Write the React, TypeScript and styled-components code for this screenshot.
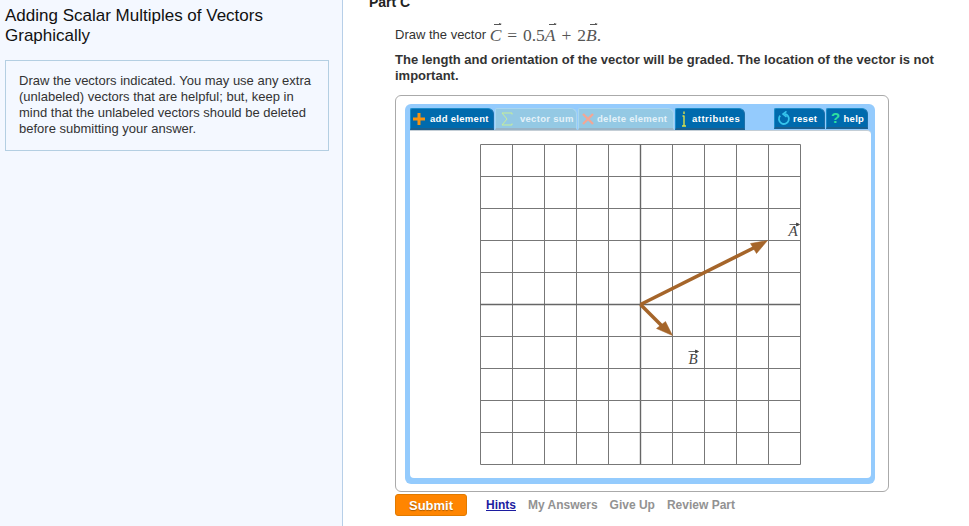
import React from "react";
import styled, { createGlobalStyle } from "styled-components";

const Global = createGlobalStyle`
  html, body { margin: 0; padding: 0; height: 100%; overflow: hidden; background: #fff; }
  body { font-family: "Liberation Sans", Arial, sans-serif; }
`;

const Page = styled.div`
  display: flex;
  width: 969px;
  height: 526px;
  overflow: hidden;
`;

const Sidebar = styled.aside`
  box-sizing: border-box;
  width: 343px;
  flex: none;
  height: 526px;
  padding: 6px 13px 0 5px;
  background: #f4f8ff;
  border-right: 1px solid #b7cfe8;
`;

const Title = styled.h1`
  margin: 0 0 14px;
  font-size: 17px;
  line-height: 20px;
  font-weight: 400;
  color: #111;
`;

const Intro = styled.p`
  box-sizing: border-box;
  margin: 0;
  width: 324px;
  height: 91px;
  padding: 12px 13px 0 13px;
  border: 1px solid #b4cfe2;
  font-size: 13px;
  line-height: 16px;
  color: #333;
`;

const Main = styled.main`
  flex: 1;
  padding-left: 26px;
  margin-top: -5px;
`;

const PartHeading = styled.h2`
  margin: 0 0 8px;
  font-size: 14px;
  line-height: 15px;
  font-weight: 700;
  color: #222;
`;

const Content = styled.div`
  padding-left: 26px;
  width: 546px;
`;

const Question = styled.p`
  margin: 0;
  height: 26px;
  display: flex;
  align-items: flex-end;
  font-size: 13px;
  line-height: 18px;
  color: #333;
  white-space: pre;
`;

const Formula = styled.span`
  font-family: "Liberation Serif", serif;
  font-size: 17.5px;
  line-height: 18px;
  word-spacing: 1.5px;
  color: #555;
`;

const Vec = styled.i`
  position: relative;
  display: inline-block;
  &::before {
    content: "";
    position: absolute;
    left: 4px;
    top: -2px;
    width: 7px;
    height: 1px;
    background: #555;
  }
  &::after {
    content: "";
    position: absolute;
    left: 9px;
    top: -3px;
    border-left: 3px solid #555;
    border-top: 1.5px solid transparent;
    border-bottom: 1.5px solid transparent;
  }
`;

const Note = styled.p`
  margin: 8px 0 11px;
  font-size: 13px;
  line-height: 16px;
  font-weight: 700;
  color: #333;
  width: 545px;
`;

const AppletBox = styled.div`
  box-sizing: border-box;
  width: 494px;
  height: 397px;
  padding: 8px 13px 0 9px;
  border: 1px solid #aaa;
  border-radius: 6px;
  background: #fff;
`;

const Frame = styled.div`
  box-sizing: border-box;
  width: 470px;
  height: 380px;
  padding: 4px 4px 6px 5px;
  background: #94cbfd;
  border-radius: 6px;
  display: flex;
  flex-direction: column;
`;

const Toolbar = styled.div`
  display: flex;
  height: 22px;
  flex: none;
`;

const ToolGroup = styled.div<{ $end?: boolean }>`
  display: flex;
  gap: 1px;
  margin-left: ${(p) => (p.$end ? "auto" : "0")};
  margin-right: ${(p) => (p.$end ? "3px" : "0")};
  height: ${(p) => (p.$end ? "21px" : "22px")};
`;

const ToolButton = styled.button<{ $w: number; $off?: boolean; $pad: number; $gap: number; $space?: number }>`
  box-sizing: border-box;
  width: ${(p) => p.$w}px;
  display: flex;
  align-items: center;
  gap: ${(p) => p.$gap}px;
  padding: 0 0 0 ${(p) => p.$pad}px;
  border: 0;
  border-top: 1px solid ${(p) => (p.$off ? "#aad6ee" : "#1c8cc9")};
  border-left: 1px solid ${(p) => (p.$off ? "#aad6ee" : "#1c8cc9")};
  border-right: 1px solid ${(p) => (p.$off ? "#aad6ee" : "#1c6fa8")};
  border-bottom: 2px solid ${(p) => (p.$off ? "#9ab4c6" : "#1c5f8e")};
  border-radius: 2px 6px 0 0;
  background: ${(p) => (p.$off ? "#94c9e4" : "#006aad")};
  color: ${(p) => (p.$off ? "#e4f2f9" : "#fff")};
  font-family: "Liberation Sans", Arial, sans-serif;
  font-size: 9.5px;
  font-weight: 700;
  letter-spacing: ${(p) => p.$space ?? 0.3}px;
  white-space: nowrap;
`;

const Canvas = styled.div`
  flex: 1;
  background: #fff;
  border-radius: 0 4px 4px 4px;
  border-top: 1px solid #c4ced6;
  padding: 13px 0 0 70px;
`;

const ActionRow = styled.div`
  display: flex;
  align-items: center;
  margin-top: 2px;
  height: 22px;
`;

const Submit = styled.button`
  box-sizing: border-box;
  width: 72px;
  height: 22px;
  margin-right: 19px;
  padding: 0;
  border: 1px solid #e07a00;
  border-radius: 3px;
  background: #ff8500;
  color: #fff;
  font-family: "Liberation Sans", Arial, sans-serif;
  font-size: 13px;
  font-weight: 700;
  text-shadow: 0 1px 1px #a85a00;
`;

const ActionLink = styled.a<{ $on?: boolean }>`
  margin-right: 12px;
  font-size: 12px;
  font-weight: 700;
  color: ${(p) => (p.$on ? "#1c1ca0" : "#929292")};
  text-decoration: ${(p) => (p.$on ? "underline" : "none")};
`;

const GridLabel = styled.text`
  font-family: "Liberation Serif", serif;
  font-size: 15px;
  font-style: italic;
  fill: #444;
`;

const Plus = () => (
  <svg width="14" height="14" viewBox="0 0 14 14"><path d="M7 1v12M1 7h12" stroke="#f9920f" strokeWidth="3" /></svg>
);
const Sigma = () => (
  <svg width="14" height="14" viewBox="0 0 14 14" fill="none"><path d="M12 2.5V1H2l5 6-5 6h10v-1.5" stroke="#c6ee9a" strokeWidth="1" /></svg>
);
const Cross = () => (
  <svg width="14" height="14" viewBox="0 0 14 14"><path d="M2 2l10 10M12 2L2 12" stroke="#f2a796" strokeWidth="2.4" /></svg>
);
const Info = () => (
  <svg width="10" height="16" viewBox="0 0 10 16" fill="none"><path d="M5 .5v2.5M5 4.5v10M3 15h4M3.5 5H5" stroke="#d9e04a" strokeWidth="1.4" /></svg>
);
const Reset = () => (
  <svg width="14" height="15" viewBox="0 0 14 15" fill="none">
    <path d="M3.2 4.6A5 5 0 1 0 7.5 3" stroke="#36c4ec" strokeWidth="1.8" />
    <path d="M9.5 .4L6 3l3.5 2.8" stroke="#36c4ec" strokeWidth="1.6" />
  </svg>
);
const HelpMark = styled.span`
  font-size: 15px;
  line-height: 14px;
  font-weight: 700;
  color: #2ee0a0;
`;

const cells = Array.from({ length: 11 }, (_, i) => i * 32);

const Graph = () => (
  <svg width="322" height="322" viewBox="0 0 322 322">
    <g transform="translate(0.5 0.5)">
      {cells.map((c) => (
        <g key={c} stroke={c === 160 ? "#666" : "#777"} strokeWidth={c === 160 ? 1.4 : 1}>
          <line x1={c} y1={0} x2={c} y2={320} />
          <line x1={0} y1={c} x2={320} y2={c} />
        </g>
      ))}
      <g fill="#a5652a" stroke="#a5652a">
        <line x1={160} y1={160} x2={275} y2={102.5} strokeWidth={3.6} />
        <polygon points="287,96 270,99 276,109" strokeWidth={0.5} />
        <line x1={160} y1={160} x2={182} y2={182} strokeWidth={3.6} />
        <polygon points="192,191 176,184 185,177" strokeWidth={0.5} />
      </g>
      <g stroke="#444" strokeWidth={0.8} fill="#444">
        <line x1={309} y1={80} x2={318} y2={80} />
        <polygon points="319,80 316,78.5 316,81.5" />
        <line x1={208} y1={207} x2={217} y2={207} />
        <polygon points="218,207 215,205.5 215,208.5" />
      </g>
      <GridLabel x={308} y={91}>A</GridLabel>
      <GridLabel x={208} y={219}>B</GridLabel>
    </g>
  </svg>
);

export default function App() {
  return (
    <Page>
      <Global />
      <Sidebar>
        <Title>Adding Scalar Multiples of Vectors Graphically</Title>
        <Intro>
          Draw the vectors indicated. You may use any extra (unlabeled) vectors that are helpful; but, keep in mind that the unlabeled vectors should be deleted before submitting your answer.
        </Intro>
      </Sidebar>
      <Main>
        <PartHeading>Part C</PartHeading>
        <Content>
          <Question>
            {"Draw the vector "}
            <Formula>
              <Vec>C</Vec> = 0.5<Vec>A</Vec> + 2<Vec>B</Vec>.
            </Formula>
          </Question>
          <Note>The length and orientation of the vector will be graded. The location of the vector is not important.</Note>
          <AppletBox>
            <Frame>
              <Toolbar>
                <ToolGroup>
                  <ToolButton $w={84} $pad={1} $gap={4}><Plus />add element</ToolButton>
                  <ToolButton $w={82} $off $pad={4} $gap={3}><Sigma />&nbsp;vector sum</ToolButton>
                  <ToolButton $w={96} $off $pad={2} $gap={2}><Cross />delete element</ToolButton>
                  <ToolButton $w={70} $pad={3} $gap={3} $space={0.5}><Info />attributes</ToolButton>
                </ToolGroup>
                <ToolGroup $end>
                  <ToolButton $w={51} $pad={2} $gap={2}><Reset />reset</ToolButton>
                  <ToolButton $w={42} $pad={4} $gap={3}><HelpMark>?</HelpMark>help</ToolButton>
                </ToolGroup>
              </Toolbar>
              <Canvas><Graph /></Canvas>
            </Frame>
          </AppletBox>
          <ActionRow>
            <Submit>Submit</Submit>
            <ActionLink $on>Hints</ActionLink>
            <ActionLink>My Answers</ActionLink>
            <ActionLink>Give Up</ActionLink>
            <ActionLink>Review Part</ActionLink>
          </ActionRow>
        </Content>
      </Main>
    </Page>
  );
}
